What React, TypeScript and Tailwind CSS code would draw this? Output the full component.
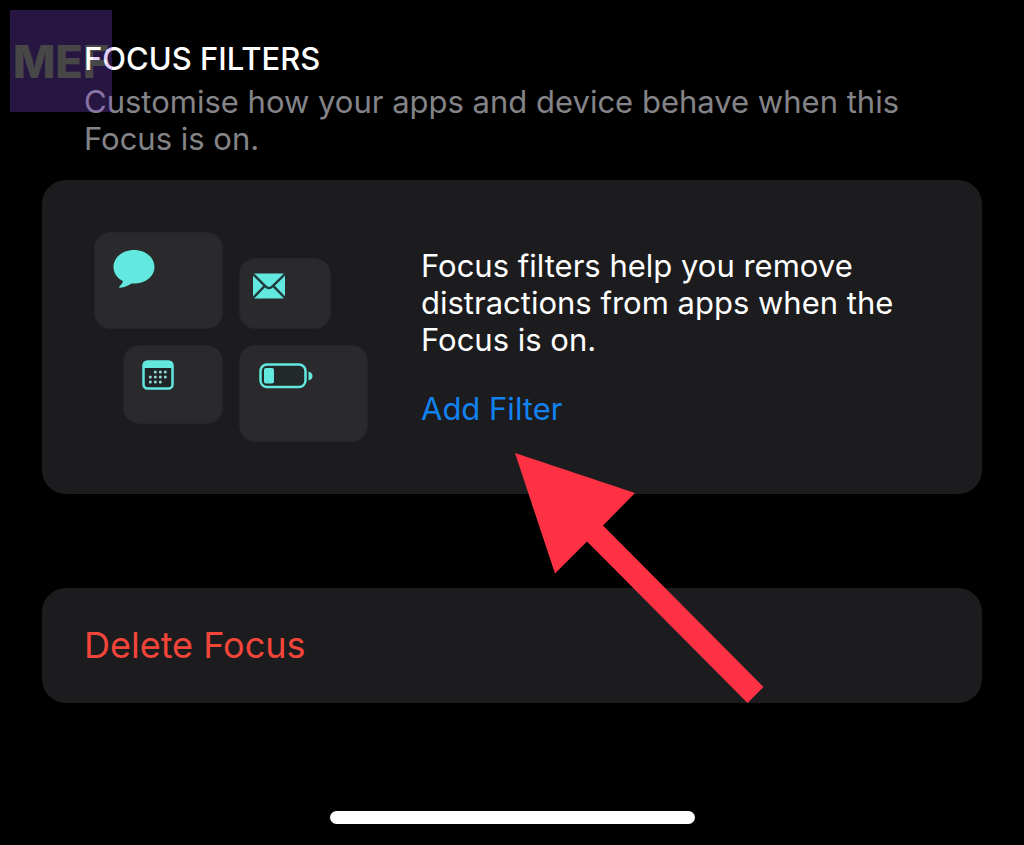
import type { ReactNode } from "react";
import clsx from "clsx";

const Tile = ({ className, children }: { className: string; children: ReactNode }) => (
    <div className={clsx("rounded-2xl border border-[#262628] bg-[#2a2a2c] text-[#62e8df]", className)}>{children}</div>
);

const MessageIcon = () => (
    <svg width="42" height="40" viewBox="0 0 42 40" fill="currentColor" aria-hidden="true">
        <path d="M21 1C9.500 1 0.500 8.500 0.500 18C0.500 24 4 29 9.800 32C9.800 34 8.500 35.600 6.300 37.400C5.700 38.200 6.100 38.900 7.100 38.800C11.600 38.300 15.200 36.600 18.600 34.500C31.500 35.600 41.500 28 41.500 18C41.500 8.500 32.500 1 21 1Z" />
    </svg>
);

const MailIcon = () => (
    <svg width="32" height="26" viewBox="0 0 32 26" aria-hidden="true">
        <rect width="32" height="25" y="0.5" rx="2" fill="currentColor" />
        <path
            d="M0 1L12.500 13.300Q16 17 19.500 13.300L32 1M0 25L11.800 12.800M32 25L20.200 12.800"
            fill="none"
            stroke="#1f3b3d"
            strokeWidth="2.4"
        />
    </svg>
);

const dots = [
    [13, 12], [18, 12], [23, 12],
    [8, 17], [13, 17], [18, 17], [23, 17],
    [8, 22], [13, 22], [18, 22],
];

const CalendarIcon = () => (
    <svg width="32" height="30" viewBox="0 0 32 30" fill="currentColor" aria-hidden="true">
        <rect x="1.500" y="1.500" width="29" height="27" rx="4" fill="#202426" stroke="currentColor" strokeWidth="2.500" />
        <path d="M1 8V5Q1 1 5 1H27Q31 1 31 5V8Z" />
        {dots.map(([x, y]) => (
            <circle key={`${x}-${y}`} cx={x + 0.3} cy={y} r="1.500" fill="#8fdcd6" />
        ))}
    </svg>
);

const BatteryIcon = () => (
    <svg width="54" height="26" viewBox="0 0 54 26" fill="currentColor" aria-hidden="true">
        <rect x="1.500" y="1.500" width="45" height="22.500" rx="6.500" fill="#232829" stroke="currentColor" strokeWidth="2.500" />
        <rect x="5" y="5" width="10" height="15.500" rx="2" />
        <path d="M49.500 8.500Q53.500 9.500 53.500 13Q53.500 16.500 49.500 17.500Z" />
    </svg>
);

const Arrow = () => (
    <svg
        className="pointer-events-none absolute left-[94px] top-[206px] z-10"
        width="250"
        height="250"
        viewBox="0 0 250 250"
        fill="#ff3144"
        aria-hidden="true"
    >
        <path d="M0 0L120 40L88 72.500L248.500 234L232.500 250L72 88.500L40 120.500Z" />
    </svg>
);

const Watermark = () => (
    <div className="pointer-events-none absolute left-[10px] top-[10px] z-10 flex size-[102px] items-center justify-center bg-[#8f4fec] text-[45px] font-extrabold text-white opacity-[0.28]">
        MEF
    </div>
);

const App = () => {
    return (
        <main className="relative flex min-h-screen flex-col bg-black px-[42px] pt-10 pb-[21px] font-['Inter',sans-serif] text-[31px] leading-[37px] text-white">
            <Watermark />
            <header className="px-[42px]">
                <h1 className="font-medium">FOCUS FILTERS</h1>
                <p className="mt-1.5 text-[#848488]">Customise how your apps and device behave when this Focus is on.</p>
            </header>

            <section className="mt-[23px] flex items-center gap-[53px] rounded-3xl bg-[#1c1c1e] p-[52px]">
                <div className="grid shrink-0 grid-cols-[129px_129px] gap-4">
                    <Tile className="h-[97px] self-end pt-4 pl-[18px]">
                        <MessageIcon />
                    </Tile>
                    <Tile className="h-[71px] w-[92px] self-end pt-3.5 pl-[13px]">
                        <MailIcon />
                    </Tile>
                    <Tile className="h-[79px] w-[100px] justify-self-end pt-3.5 pl-[18px]">
                        <CalendarIcon />
                    </Tile>
                    <Tile className="h-[97px] pt-[17px] pl-[19px]">
                        <BatteryIcon />
                    </Tile>
                </div>
                <div className="relative">
                    <p>Focus filters help you remove distractions from apps when the Focus is on.</p>
                    <button type="button" className="mt-8 block cursor-pointer text-[#1282f0]">
                        Add Filter
                    </button>
                    <Arrow />
                </div>
            </section>

            <button
                type="button"
                className="mt-[94px] cursor-pointer rounded-3xl bg-[#1c1c1e] px-[42px] py-[39px] text-left text-[36px] text-[#f4453a]"
            >
                Delete Focus
            </button>

            <div className="mx-auto mt-auto h-[13px] w-[365px] rounded-full bg-white" />
        </main>
    );
};

export default App;
